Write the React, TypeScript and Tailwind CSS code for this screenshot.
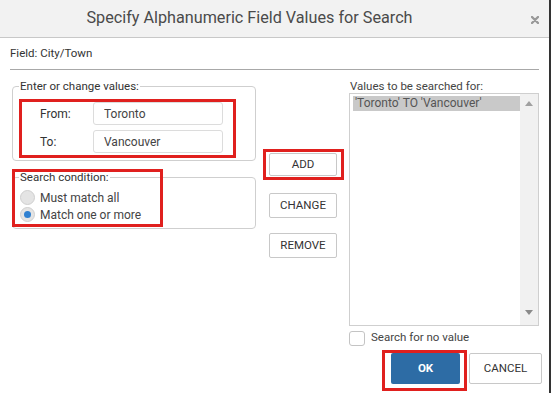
import React, { useState } from 'react';

const RED = 'border-[3px] border-[#e0201e]';

const Radio = ({ checked, label, onClick }: { checked: boolean; label: string; onClick: () => void }) => (
    <div className="flex items-center h-[15px] cursor-pointer" onClick={onClick}>
        <span className="w-[15px] h-[15px] rounded-full bg-[#e4e4e4] border border-[#cfcfcf] flex items-center justify-center">
            {checked && <span className="w-[7px] h-[7px] rounded-full bg-[#2f80d1]" />}
        </span>
        <span className="ml-[5px] text-[12px] text-[#444]">{label}</span>
    </div>
);

const Btn = ({ children, className = '' }: { children: React.ReactNode; className?: string }) => (
    <button className={`block w-[68px] border border-[#c8c8c8] rounded-[2px] bg-white text-[11.5px] text-[#333] uppercase ${className}`}>
        {children}
    </button>
);

export default function App() {
    const [from, setFrom] = useState('Toronto');
    const [to, setTo] = useState('Vancouver');
    const [mode, setMode] = useState('one');
    const [noValue, setNoValue] = useState(false);

    return (
        <div className="w-[551px] h-[393px] bg-white border-r-2 border-[#333] overflow-hidden font-['Roboto','Liberation_Sans',sans-serif] text-[#333]">
            {/* title bar */}
            <div className="h-[38px] bg-[#f2f2f2] border-b border-[#c8c8c8] flex items-center">
                <div className="flex-1 text-center text-[16.2px] text-[#4a4a4a]">Specify Alphanumeric Field Values for Search</div>
                <div className="w-[50px] flex justify-end pr-[10px] pt-[3px]">
                    <svg width="8" height="8" viewBox="0 0 8 8">
                        <path d="M1 1L7 7M7 1L1 7" stroke="#999" strokeWidth="2.4" strokeLinecap="round" />
                    </svg>
                </div>
            </div>

            <div className="px-[10px]">
                <div className="h-[32px] border-b border-[#a8a8a8] flex items-center text-[11.5px]">Field: City/Town</div>

                <div className="flex">
                    {/* left column */}
                    <div className="ml-[2px] w-[244px] pt-[9px]">
                        <fieldset className="border border-[#cfcfcf] rounded-[4px] p-0">
                            <legend className="ml-[6px] px-[1px] text-[11.5px] leading-[14px]">Enter or change values:</legend>
                            <div className={`${RED} mt-[6px] ml-[6px] mr-[19px] mb-[2px] pb-[2px] pr-[10px] flex flex-col gap-[5px]`}>
                                <div className="flex items-center">
                                    <span className="w-[71px] pl-[18px] text-[12px]">From:</span>
                                    <input
                                        value={from}
                                        onChange={(e) => setFrom(e.target.value)}
                                        className="w-[130px] h-[23px] border border-[#dcdcdc] rounded-[3px] px-[10px] text-[12px] text-[#444] outline-none"
                                    />
                                </div>
                                <div className="flex items-center">
                                    <span className="w-[71px] pl-[18px] text-[12px]">To:</span>
                                    <input
                                        value={to}
                                        onChange={(e) => setTo(e.target.value)}
                                        className="w-[130px] h-[23px] border border-[#dcdcdc] rounded-[3px] px-[10px] text-[12px] text-[#444] outline-none"
                                    />
                                </div>
                            </div>
                        </fieldset>

                        <div className="relative mt-[9px]">
                            <fieldset className="border border-[#cfcfcf] rounded-[4px] p-0 pb-[6px]">
                                <legend className="ml-[6px] px-[1px] text-[11.5px] leading-[14px]">Search condition:</legend>
                                <div className="ml-[7px] mt-[6px] flex flex-col gap-[2px]">
                                    <Radio checked={mode === 'all'} label="Must match all" onClick={() => setMode('all')} />
                                    <Radio checked={mode === 'one'} label="Match one or more" onClick={() => setMode('one')} />
                                </div>
                            </fieldset>
                            <div className={`${RED} absolute left-0 -top-[1px] w-[151px] h-[58px] pointer-events-none`} />
                        </div>
                    </div>

                    {/* middle buttons */}
                    <div className="ml-[13px] pt-[83px] flex flex-col">
                        <div className="relative">
                            <Btn className="h-[23px]">Add</Btn>
                            <div className={`${RED} absolute -left-[6px] -right-[7px] -top-[4px] -bottom-[4px] pointer-events-none`} />
                        </div>
                        <Btn className="h-[25px] mt-[17px]">Change</Btn>
                        <Btn className="h-[25px] mt-[15px]">Remove</Btn>
                    </div>

                    {/* right column */}
                    <div className="ml-[12px] w-[193px] pt-[9px]">
                        <div className="h-[14px] leading-[14px] text-[11.5px] text-[#444] pl-[1px]">Values to be searched for:</div>
                        <div className="w-[190px] h-[233px] border border-[#cfcfcf] flex">
                            <div className="flex-1 pt-[2px] pl-[3px]">
                                <div className="h-[15px] leading-[15px] bg-[#c9c9c9] text-[12px] text-[#555] pl-[2px]">'Toronto' TO 'Vancouver'</div>
                            </div>
                            <div className="w-[18px] bg-[#f1f1f1] flex flex-col items-center justify-between pt-[7px] pb-[10px]">
                                <svg width="8" height="5" viewBox="0 0 8 5"><path d="M0 5L4 0L8 5Z" fill="#a0a0a0" /></svg>
                                <svg width="8" height="5" viewBox="0 0 8 5"><path d="M0 0L4 5L8 0Z" fill="#8a8a8a" /></svg>
                            </div>
                        </div>
                        <label className="mt-[5px] h-[14px] flex items-center cursor-pointer">
                            <input type="checkbox" checked={noValue} onChange={(e) => setNoValue(e.target.checked)} className="hidden" />
                            <span className="w-[16px] h-[15px] border border-[#c4c4c4] rounded-[3px] bg-white" />
                            <span className="ml-[6px] text-[11.5px] text-[#444]">Search for no value</span>
                        </label>
                        <div className="mt-[8px] flex">
                            <div className="relative ml-[42px]">
                                <button className="block w-[69px] h-[31px] bg-[#2d6ca5] rounded-[2px] text-white font-bold text-[11.5px]">OK</button>
                                <div className={`${RED} absolute -left-[9px] -right-[7px] -top-[3px] -bottom-[7px] pointer-events-none`} />
                            </div>
                            <button className="block ml-[9px] w-[73px] h-[31px] border border-[#c8c8c8] rounded-[2px] bg-white text-[11.5px] text-[#333]">CANCEL</button>
                        </div>
                    </div>
                </div>
            </div>
        </div>
    );
}
